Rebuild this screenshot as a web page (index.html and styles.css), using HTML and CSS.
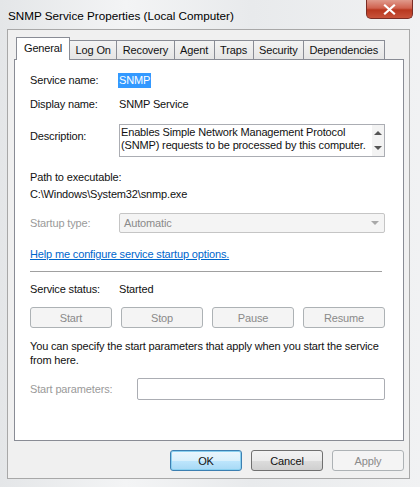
FILE: index.html
```html
<!DOCTYPE html>
<html lang="en">
<head>
    <meta charset="UTF-8">
    <title>SNMP Service Properties (Local Computer)</title>
    <link rel="stylesheet" href="styles.css">
</head>
<body>
    <div class="screen">
        <div class="titlebar">
            <span class="title">SNMP Service Properties (Local Computer)</span>
            <span class="close">
                <svg width="13" height="11" viewBox="0 0 13 11"><path d="M2 1.5 L11 9.5 M11 1.5 L2 9.5" stroke="#fff" stroke-width="2.2" stroke-linecap="square"/></svg>
            </span>
        </div>

        <div class="client">
            <div class="tabs">
                <div class="tab active">General</div>
                <div class="tab">Log On</div>
                <div class="tab">Recovery</div>
                <div class="tab">Agent</div>
                <div class="tab">Traps</div>
                <div class="tab">Security</div>
                <div class="tab">Dependencies</div>
            </div>

            <div class="panel">
                <div class="row first">
                    <span class="label">Service name:</span>
                    <span class="selected">SNMP</span>
                </div>
                <div class="row">
                    <span class="label">Display name:</span>
                    <span>SNMP Service</span>
                </div>
                <div class="row desc-row">
                    <span class="label">Description:</span>
                    <div class="textbox">
                        <div class="desc-text">Enables Simple Network Management Protocol (SNMP) requests to be processed by this computer.</div>
                        <div class="scroll">
                            <span class="arrow up"></span>
                            <span class="arrow down"></span>
                        </div>
                    </div>
                </div>

                <div class="path-label">Path to executable:</div>
                <div class="path">C:\Windows\System32\snmp.exe</div>

                <div class="row combo-row">
                    <span class="label disabled">Startup type:</span>
                    <div class="combo">
                        <span>Automatic</span>
                        <span class="arrow down"></span>
                    </div>
                </div>

                <a class="help" href="#">Help me configure service startup options.</a>
                <div class="separator"></div>

                <div class="row status-row">
                    <span class="label">Service status:</span>
                    <span>Started</span>
                </div>

                <div class="control-buttons">
                    <button class="btn disabled-btn">Start</button>
                    <button class="btn disabled-btn">Stop</button>
                    <button class="btn disabled-btn">Pause</button>
                    <button class="btn disabled-btn">Resume</button>
                </div>

                <p class="note">You can specify the start parameters that apply when you start the service from here.</p>

                <div class="params-row">
                    <span class="label disabled">Start parameters:</span>
                    <div class="params-input"></div>
                </div>
            </div>

            <div class="actions">
                <button class="btn ok">OK</button>
                <button class="btn">Cancel</button>
                <button class="btn disabled-btn">Apply</button>
            </div>
        </div>
    </div>
</body>
</html>
```

FILE: styles.css
```css
body {
    margin: 0;
    font-family: "Liberation Sans", Arial, sans-serif;
    font-size: 11px;
    letter-spacing: -0.15px;
    color: #111;
}
.screen {
    width: 420px;
    height: 487px;
    overflow: hidden;
    background: linear-gradient(90deg, #e4e6e8 0%, #f3f4f5 30%, #e8eaec 60%, #f1f2f3 100%);
}
.titlebar {
    height: 29px;
    display: flex;
    justify-content: space-between;
    align-items: flex-start;
}
.title {
    padding: 8px 0 0 8px;
    font-size: 11.7px;
    letter-spacing: 0;
    line-height: 15px;
    color: #000;
    white-space: nowrap;
}
.close {
    width: 47px;
    height: 19px;
    margin-right: 7px;
    box-sizing: border-box;
    border: 1px solid #7a2d24;
    border-top: none;
    border-radius: 0 0 5px 5px;
    background: linear-gradient(#e09a8c 0%, #d0624f 45%, #b8371f 55%, #c8533a 100%);
    display: flex;
    align-items: center;
    justify-content: center;
}
.client {
    margin: 0 10px 0 7px;
    height: 450px;
    box-sizing: border-box;
    border: 1px solid #a8a8a8;
    background: #f0f0f0;
    padding-top: 7px;
}
.tabs {
    display: flex;
    align-items: flex-end;
    height: 22px;
    margin-left: 9px;
    position: relative;
    z-index: 1;
}
.tab {
    height: 18px;
    line-height: 19px;
    padding: 0 5.5px;
    border: 1px solid #898c95;
    border-bottom: none;
    margin-left: -1px;
    background: linear-gradient(#f3f3f3, #e5e5e5);
    color: #111;
    white-space: nowrap;
}
.tab.active {
    height: 22px;
    line-height: 20px;
    margin-bottom: -1px;
    padding: 0 7px;
    background: #fff;
    position: relative;
}
.panel {
    margin: 0 5px 0 6px;
    height: 382px;
    box-sizing: border-box;
    border: 1px solid #898c95;
    background: #fff;
    padding: 0 18px 0 15px;
}
.row {
    display: flex;
    line-height: 15px;
    margin-top: 9px;
}
.row.first {
    margin-top: 13px;
}
.label {
    width: 89px;
    flex-shrink: 0;
}
.disabled {
    color: #9a9a9a;
}
.selected {
    background: #3399ff;
    color: #fff;
    padding: 0 1px;
    margin-left: -1px;
}
.desc-row {
    margin-top: 12px;
}
.desc-row .label {
    padding-top: 5px;
}
.textbox {
    flex: 1;
    height: 33px;
    box-sizing: border-box;
    border: 1px solid #abadb3;
    display: flex;
}
.desc-text {
    flex: 1;
    line-height: 13px;
    padding: 1px 0 0 1px;
}
.scroll {
    width: 12px;
    background: #f3f3f3;
    display: flex;
    flex-direction: column;
    justify-content: space-around;
    align-items: center;
}
.arrow {
    width: 0;
    height: 0;
    border-left: 4px solid transparent;
    border-right: 4px solid transparent;
}
.arrow.up {
    border-bottom: 4px solid #555;
}
.arrow.down {
    border-top: 4px solid #555;
}
.path-label {
    margin-top: 13px;
    line-height: 15px;
}
.path {
    margin-top: 2px;
    line-height: 15px;
}
.combo-row {
    margin-top: 11px;
    align-items: center;
}
.combo {
    flex: 1;
    height: 20px;
    box-sizing: border-box;
    border: 1px solid #c5c5c5;
    border-radius: 2px;
    background: #f4f4f4;
    color: #8a8a8a;
    display: flex;
    align-items: center;
    justify-content: space-between;
    padding: 0 5px 0 4px;
}
.combo .arrow.down {
    border-top-color: #a8a8a8;
}
.help {
    display: inline-block;
    margin-top: 14px;
    line-height: 15px;
    color: #0066cc;
}
.separator {
    margin-top: 9px;
    height: 1px;
    background: #a0a0a0;
    margin-right: 3px;
}
.status-row {
    margin-top: 10px;
}
.control-buttons {
    display: flex;
    gap: 9px;
    margin-top: 10px;
}
.btn {
    height: 21px;
    box-sizing: border-box;
    font-family: inherit;
    font-size: 11px;
    letter-spacing: -0.15px;
    padding: 0;
    border: 1px solid #707070;
    border-radius: 3px;
    background: linear-gradient(#f2f2f2 0%, #ebebeb 50%, #dddddd 50%, #cfcfcf 100%);
    color: #111;
}
.control-buttons .btn {
    flex: 1;
}
.disabled-btn {
    border-color: #adb2b5;
    background: #f4f4f4;
    color: #8a8a8a;
}
.note {
    margin: 11px 0 0 0;
    line-height: 14px;
}
.params-row {
    display: flex;
    align-items: center;
    margin-top: 11px;
}
.params-row .label {
    width: 107px;
}
.params-input {
    flex: 1;
    height: 22px;
    box-sizing: border-box;
    border: 1px solid #abadb3;
    border-radius: 2px;
}
.actions {
    display: flex;
    justify-content: flex-end;
    gap: 9px;
    margin: 9px 5px 0 0;
}
.actions .btn {
    width: 72px;
}
.btn.ok {
    border-color: #3c7fb1;
    background: linear-gradient(#eaf6fd 0%, #d9f0fc 50%, #bee6fd 50%, #a7d9f5 100%);
    box-shadow: inset 0 0 0 1px #8ad0f0;
}
```
